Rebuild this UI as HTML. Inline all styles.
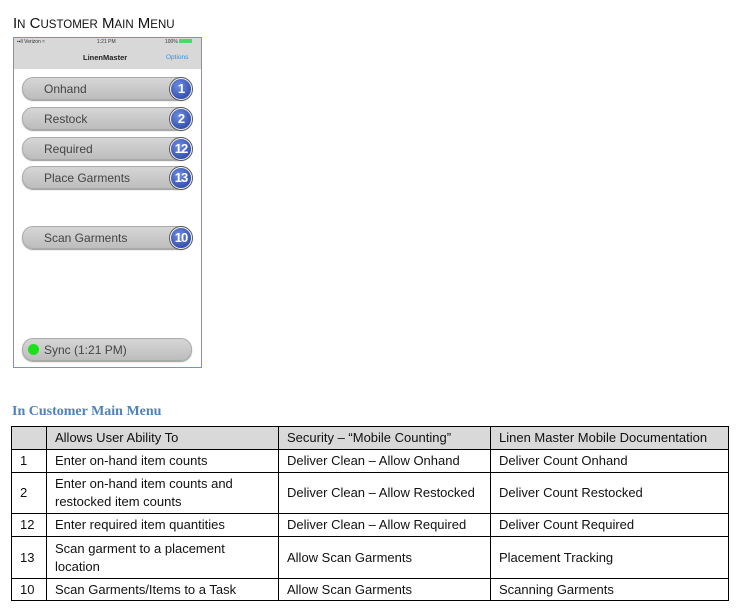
<!DOCTYPE html><html><head><style>
body{margin:0;width:742px;height:612px;background:#fff;position:relative;font-family:"Liberation Sans",sans-serif;overflow:hidden}
.t{position:absolute;left:13px;top:15px;font-size:15px;color:#111;font-family:"Liberation Sans",sans-serif}
.t small{font-size:11.5px}
.ph{position:absolute;left:13px;top:37px;width:187px;height:329px;border:1px solid #6f95cc;background:#fff}
.sb{position:absolute;left:0;top:0;width:187px;height:31px;background:#d8d8d8}
.btn{position:absolute;left:8px;width:168px;height:21px;border-radius:11px;background:linear-gradient(#d6d6d6,#bdbdbd);border:1px solid #aaa;box-shadow:0 1px 1px #999;font-size:12px;color:#444;line-height:22px}
.btn span{position:absolute;left:21px}
.n{position:absolute;right:-1px;top:0px;width:20px;height:20px;border-radius:50%;background:radial-gradient(circle at 40% 35%,#6f8ee0,#1e3a9e);border:1px solid #eee;box-shadow:0 0 0 1px #555;color:#fff;font-weight:bold;font-size:13px;text-align:center;line-height:20px;letter-spacing:-1px}
h2{position:absolute;left:12px;top:404px;margin:0;font-family:"Liberation Serif",serif;font-size:14px;color:#4f81bd;font-weight:bold}
table{position:absolute;left:11px;top:426px;border-collapse:collapse;font-size:13px;color:#111}
td{border:1px solid #000;padding:0 8px;line-height:18px;vertical-align:middle}
tr.h td{background:#d9d9d9}
</style></head><body>
<div class="t">I<small>N</small> C<small>USTOMER</small> M<small>AIN</small> M<small>ENU</small></div>
<div class="ph">
<div class="sb">
<div style="position:absolute;left:3px;top:1px;font-size:5px;color:#333">▪▪ll Verizon ≈</div>
<div style="position:absolute;left:83px;top:1px;font-size:5px;color:#333">1:21 PM</div>
<div style="position:absolute;left:151px;top:1px;font-size:5px;color:#333">100% <span style="display:inline-block;width:13px;height:4px;background:#4cd964"></span></div>
<div style="position:absolute;left:69px;top:15px;font-size:7.5px;font-weight:bold;color:#222">LinenMaster</div>
<div style="position:absolute;left:152px;top:16px;font-size:6.5px;color:#3b8de0">Options</div>
</div>
<div class="btn" style="top:39px"><span>Onhand</span><div class="n">1</div></div>
<div class="btn" style="top:69px"><span>Restock</span><div class="n">2</div></div>
<div class="btn" style="top:99px"><span>Required</span><div class="n">12</div></div>
<div class="btn" style="top:128px"><span>Place Garments</span><div class="n">13</div></div>
<div class="btn" style="top:188px"><span>Scan Garments</span><div class="n">10</div></div>
<div class="btn" style="top:300px"><span>Sync (1:21 PM)</span><div style="position:absolute;left:5px;top:5px;width:11px;height:11px;border-radius:50%;background:#1de01d"></div></div>
</div>
<h2>In Customer Main Menu</h2>
<table>
<tr class="h" style="height:23px"><td style="width:18px"></td><td style="width:215px">Allows User Ability To</td><td style="width:195px">Security – “Mobile Counting”</td><td style="width:221px">Linen Master Mobile Documentation</td></tr>
<tr style="height:23px"><td>1</td><td>Enter on-hand item counts</td><td>Deliver Clean – Allow Onhand</td><td>Deliver Count Onhand</td></tr>
<tr style="height:41px"><td>2</td><td>Enter on-hand item counts and restocked item counts</td><td>Deliver Clean – Allow Restocked</td><td>Deliver Count Restocked</td></tr>
<tr style="height:23px"><td>12</td><td>Enter required item quantities</td><td>Deliver Clean – Allow Required</td><td>Deliver Count Required</td></tr>
<tr style="height:42px"><td>13</td><td>Scan garment to a placement location</td><td>Allow Scan Garments</td><td>Placement Tracking</td></tr>
<tr style="height:22px"><td>10</td><td>Scan Garments/Items to a Task</td><td>Allow Scan Garments</td><td>Scanning Garments</td></tr>
</table>
</body></html>
